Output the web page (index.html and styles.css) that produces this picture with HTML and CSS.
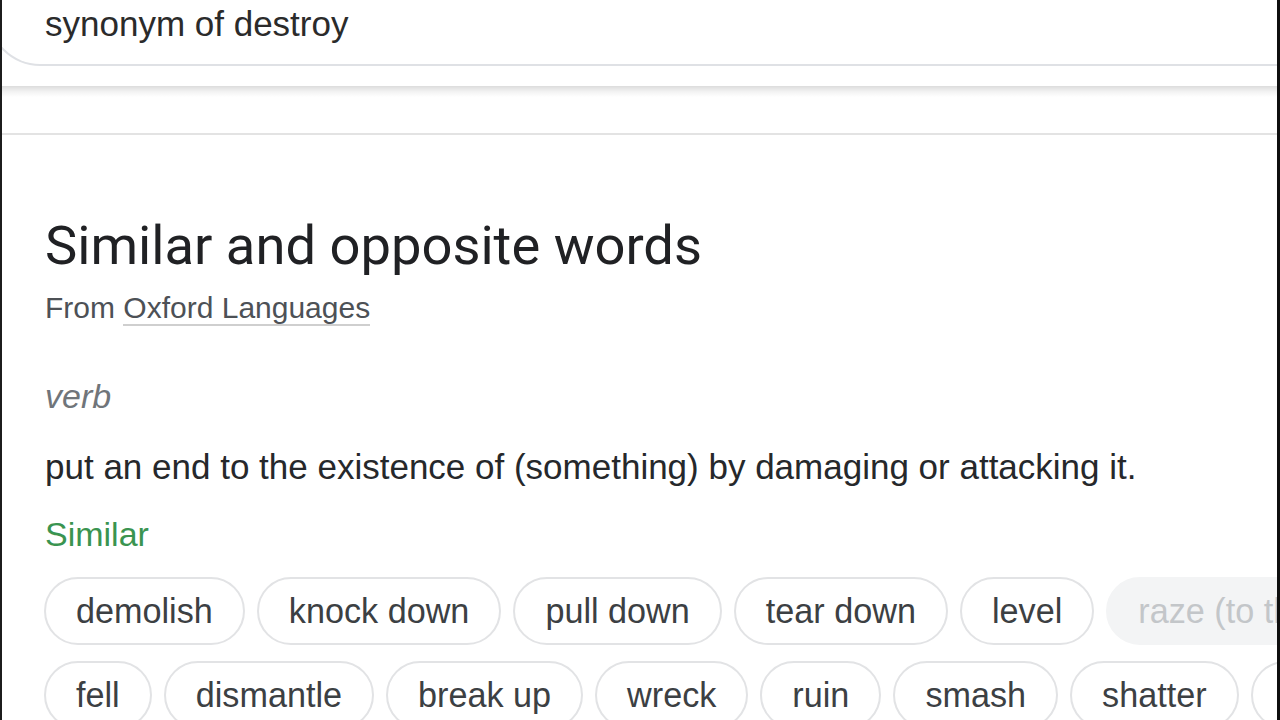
FILE: index.html
```html
<!DOCTYPE html>
<html lang="en">
<head>
    <meta charset="UTF-8">
    <meta name="viewport" content="width=device-width, initial-scale=1.0">
    <title>synonym of destroy</title>
    <link rel="stylesheet" href="styles.css">
</head>
<body>
    <div class="header">
        <div class="search-box">
            <span class="search-text">synonym of destroy</span>
        </div>
    </div>
    <div class="header-shadow"></div>
    <div class="tabs-line"></div>

    <div class="content">
        <h1>Similar and opposite words</h1>
        <div class="source">From <a href="#">Oxford Languages</a></div>

        <div class="word-type">verb</div>
        <div class="definition">put an end to the existence of (something) by damaging or attacking it.</div>
        <div class="label-similar">Similar</div>

        <div class="chips">
            <div class="chip-row">
                <span class="chip">demolish</span>
                <span class="chip">knock down</span>
                <span class="chip">pull down</span>
                <span class="chip">tear down</span>
                <span class="chip">level</span>
                <span class="chip faded">raze (to the ground)</span>
            </div>
            <div class="chip-row">
                <span class="chip">fell</span>
                <span class="chip">dismantle</span>
                <span class="chip">break up</span>
                <span class="chip">wreck</span>
                <span class="chip">ruin</span>
                <span class="chip">smash</span>
                <span class="chip">shatter</span>
                <!-- next chip only peeks in at the edge -->
                <span class="chip chip-edge" aria-hidden="true"></span>
            </div>
        </div>
    </div>
</body>
</html>
```

FILE: styles.css
```css
html, body {
    margin: 0;
    height: 720px;
    overflow: hidden;
}

body {
    box-sizing: border-box;
    font-family: 'Liberation Sans', Arial, sans-serif;
    background: #fff;
    color: #202124;
    border-left: 2px solid #1c1c1c;
    border-right: 3px solid #0e0e0e;
}

/* search header */
.header {
    height: 86px;
}

.search-box {
    box-sizing: border-box;
    height: 66px;
    margin-left: -14px;
    width: calc(100% + 60px);
    border: 2px solid #dfe1e5;
    border-top: none;
    border-radius: 0 0 0 52px;
    padding-left: 55px;
    padding-top: 4px;
}

.search-text {
    font-size: 35px;
    line-height: 40px;
    color: #2b2b2b;
}

.header-shadow {
    height: 11px;
    background: linear-gradient(#dcdcdc, #f2f2f2 50%, #fff);
}

.tabs-line {
    height: 2px;
    margin-top: 36px;
    background: #e3e3e3;
}

/* result card */
.content {
    padding-left: 43px;
    padding-top: 79px;
}

h1 {
    margin: 0;
    font-family: Roboto, 'Liberation Sans', sans-serif;
    font-weight: 400;
    font-size: 54.3px;
    line-height: 64px;
    color: #202124;
}

.source {
    margin-top: 13px;
    font-size: 30px;
    line-height: 34px;
    color: #4d5156;
}

.source a {
    color: #4d5156;
    text-decoration: none;
    border-bottom: 2px solid #cfcfcf;
}

.word-type {
    margin-top: 52px;
    font-size: 34px;
    line-height: 39px;
    font-style: italic;
    color: #70757a;
}

.definition {
    margin-top: 31px;
    font-size: 35px;
    line-height: 39px;
    color: #26282b;
}

.label-similar {
    margin-top: 29px;
    font-size: 34px;
    line-height: 39px;
    color: #3a9450;
}

.chips {
    margin-top: 23px;
    margin-left: -1px;
    display: flex;
    flex-direction: column;
    gap: 16px;
}

.chip-row {
    display: flex;
    gap: 12px;
    white-space: nowrap;
}

.chip {
    box-sizing: border-box;
    flex-shrink: 0;
    height: 68px;
    padding: 0 30px;
    border: 2px solid #e2e3e5;
    border-radius: 34px;
    font-size: 34.2px;
    line-height: 64px;
    color: #3c4043;
}

.chip.faded {
    background: #f3f4f5;
    border-color: #f3f4f5;
    color: #c3c6c9;
}

.chip.chip-edge {
    width: 140px;
}
```
